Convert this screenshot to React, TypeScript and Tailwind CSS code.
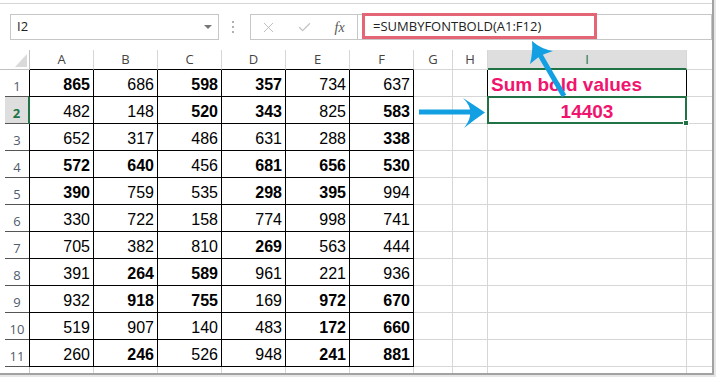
import { X, Check } from "lucide-react";

const rows = [
  "865* 686 598* 357* 734 637",
  "482 148 520* 343* 825 583*",
  "652 317 486 631 288 338*",
  "572* 640* 456 681* 656* 530*",
  "390* 759 535 298* 395* 994",
  "330 722 158 774 998 741",
  "705 382 810 269* 563 444",
  "391 264* 589* 961 221 936",
  "932 918* 755* 169 972* 670*",
  "519 907 140 483 172* 660*",
  "260 246* 526 948 241* 881*",
];

const cols = ["A", "B", "C", "D", "E", "F"];
const gridCls =
  "grid grid-cols-[30px_64px_64px_64px_64px_64px_64px_39px_35px_199px_1fr]";

function RowHeader({ n, active }: { n: number; active?: boolean }) {
  return (
    <div
      className={
        active
          ? "flex border-r-2 border-r-[#217346]"
          : n === 12
            ? "flex border-r border-r-[#c6c6c6]"
            : "flex border-r border-r-black"
      }
    >
      <div
        className={
          active
            ? "ml-[5px] flex flex-1 items-end justify-center border-b border-b-[#555] bg-[#dedede] pb-[2px] font-['Open_Sans',sans-serif] text-[13px] leading-[16px] font-bold text-[#217346]"
            : "ml-[5px] flex flex-1 items-end justify-center border-b border-b-[#555] pb-[2px] font-['Open_Sans',sans-serif] text-[13px] leading-[16px] text-[#4f5b6b]"
        }
      >
        {n}
      </div>
    </div>
  );
}

function HeaderRow() {
  return (
    <div className={`${gridCls} h-[20px] font-['Open_Sans',sans-serif] text-[13px] leading-[16px] text-[#444]`}>
      <div className="flex items-end justify-end border-r border-b border-[#c0c0c0] pr-[2px] pb-[2px]">
        <div className="h-0 w-0 border-b-[13px] border-l-[12px] border-b-[#dadada] border-l-transparent" />
      </div>
      {cols.map((c) => (
        <div
          key={c}
          className="flex items-center justify-center border-r border-b border-r-[#d6d6d6] border-b-black pb-[2px]"
        >
          {c}
        </div>
      ))}
      <div className="flex items-center justify-center border-r border-b border-[#d6d6d6] pb-[2px]">G</div>
      <div className="flex items-center justify-center border-r border-b border-r-[#d6d6d6] border-b-[#d6d6d6] pb-[2px]">H</div>
      <div className="flex items-center justify-center border-r border-b-2 border-r-[#d6d6d6] border-b-[#217346] bg-[#dedede] text-[#217346]">
        I
      </div>
      <div className="border-b border-b-[#d6d6d6]" />
    </div>
  );
}

function DataRow({ r, line }: { r: number; line: string }) {
  const vals = line.split(" ");
  return (
    <div className={`${gridCls} h-[27px]`}>
      <RowHeader n={r} active={r === 2} />
      {vals.map((v, i) => {
        const bold = v.endsWith("*");
        return (
          <div
            key={i}
            className={
              bold
                ? "flex items-end justify-end border-r border-b border-black pr-[3px] pb-[2px] text-[16px] leading-[18px] font-bold text-black"
                : "flex items-end justify-end border-r border-b border-black pr-[3px] pb-[2px] text-[16px] leading-[18px] text-black"
            }
          >
            {bold ? v.slice(0, -1) : v}
          </div>
        );
      })}
      <div className="border-r border-b border-[#d6d6d6]" />
      <div
        className={
          r === 1
            ? "border-r border-b border-r-black border-b-[#d6d6d6]"
            : "border-r border-b border-[#d6d6d6]"
        }
      />
      {r === 1 ? (
        <div className="flex items-end border-r border-b border-r-black border-b-[#d6d6d6] pl-[3px] text-[19px] leading-[22px] font-bold text-[#f0146e]">
          Sum bold values
        </div>
      ) : r === 2 ? (
        <div className="relative flex items-end justify-center border-r border-b border-[#d6d6d6] text-[19px] leading-[22px] font-bold text-[#f0146e]">
          14403
          <div className="absolute -top-[1px] -left-[1px] -right-[1px] -bottom-[1px] border-2 border-[#217346]" />
          <div className="absolute -right-[3px] -bottom-[3px] h-[6px] w-[6px] border border-white bg-[#217346]" />
        </div>
      ) : (
        <div className="border-r border-b border-[#d6d6d6]" />
      )}
      <div className="border-b border-[#d6d6d6]" />
    </div>
  );
}

function LastRow() {
  return (
    <div className={`${gridCls} h-[27px]`}>
      <RowHeader n={12} />
      {cols.map((c) => (
        <div key={c} className="border-r border-b border-[#d6d6d6]" />
      ))}
      <div className="border-r border-b border-[#d6d6d6]" />
      <div className="border-r border-b border-[#d6d6d6]" />
      <div className="border-r border-b border-[#d6d6d6]" />
      <div className="border-b border-[#d6d6d6]" />
    </div>
  );
}

function FormulaBar() {
  return (
    <div className="mt-[10px] flex h-[26px] font-['Open_Sans',sans-serif] text-[13px]">
      <div className="ml-[10px] flex w-[210px] items-center justify-between border border-[#c6c6c6] pr-[6px] pl-[6px] text-[#222]">
        <span>I2</span>
        <div className="h-0 w-0 border-x-[4px] border-t-[4px] border-x-transparent border-t-[#777]" />
      </div>
      <div className="flex w-[28px] flex-col items-center justify-center gap-[3px]">
        <div className="h-[2px] w-[2px] bg-[#b0b0b0]" />
        <div className="h-[2px] w-[2px] bg-[#b0b0b0]" />
        <div className="h-[2px] w-[2px] bg-[#b0b0b0]" />
      </div>
      <div className="ml-[3px] flex w-[108px] border border-[#c6c6c6]">
        <div className="flex w-[35px] items-center justify-center text-[#b4b4b4]">
          <X size={17} strokeWidth={1.2} />
        </div>
        <div className="flex w-[36px] items-center justify-center text-[#c4c4c4]">
          <Check size={15} strokeWidth={2.2} />
        </div>
        <div className="flex flex-1 items-center justify-center font-['Liberation_Serif',serif] text-[14px] text-[#555] italic">
          fx
        </div>
      </div>
      <div className="relative -ml-[1px] flex w-[356px] items-center border border-[#c6c6c6] pl-[15px] text-[#222]">
        <span className="pb-[1px]">=SUMBYFONTBOLD(A1:F12)</span>
        <div className="absolute -top-[2px] left-[4px] h-[26px] w-[235px] border-[3px] border-[#e46676]" />
      </div>
    </div>
  );
}

function Arrows() {
  const c = "#13a0e2";
  return (
    <svg
      className="pointer-events-none absolute top-0 left-0"
      width={716}
      height={377}
      viewBox="0 0 716 377"
    >
      <rect x={419} y={109.5} width={52} height={5} fill={c} />
      <path
        d="M485 112.5 Q474 105 463 98 Q471 106 470 112.5 Q471 119 464 128 Q474 120 485 112.5 Z"
        fill={c}
      />
      <polygon points="561.8,97.3 566.2,94.7 541.7,52.7 537.3,55.3" fill={c} />
      <path
        d="M532 41 Q541 49 553 51 Q544 54 540 56 Q536 59 530 64 Q533 52 532 41 Z"
        fill={c}
      />
    </svg>
  );
}

export default function App() {
  return (
    <div className="relative h-[377px] w-[716px] overflow-hidden bg-[#e6e6e6] font-['Liberation_Sans',Arial,sans-serif]">
      <div className="flex h-[375px] w-[714px] flex-col border-r-2 border-b-2 border-[#a2a2a2] bg-white">
        <div className="mt-[3px] border-t border-[#d6d6d6]" />
        <FormulaBar />
        <div className="mt-[10px] flex-1 overflow-hidden">
          <HeaderRow />
          {rows.map((line, i) => (
            <DataRow key={i} r={i + 1} line={line} />
          ))}
          <LastRow />
        </div>
      </div>
      <Arrows />
    </div>
  );
}
